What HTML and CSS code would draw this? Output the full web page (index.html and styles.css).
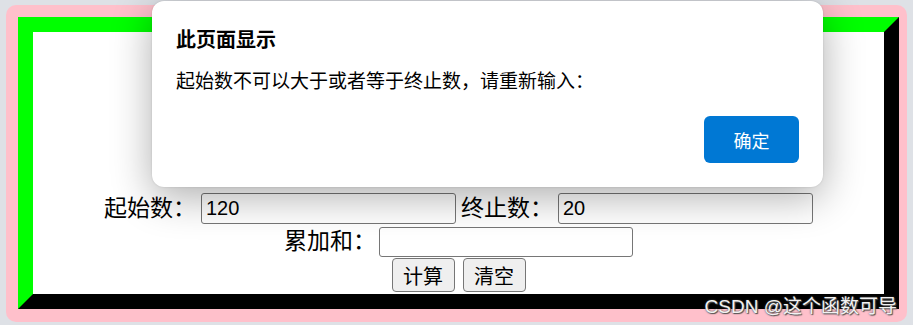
FILE: index.html
```html
<!DOCTYPE html>
<html lang="zh-CN">
<head>
<meta charset="utf-8">
<title>累加和</title>
<link rel="stylesheet" href="styles.css">
</head>
<body>
<div class="frame">
  <div class="box">
    <div class="row row-1">
      <span class="label">起始数：</span>
      <input class="field field-wide" type="text" value="120">
      <span class="label">终止数：</span>
      <input class="field field-wide" type="text" value="20">
    </div>
    <div class="row row-2">
      <span class="label">累加和：</span>
      <input class="field field-sum" type="text" value="">
    </div>
    <div class="row row-3">
      <button class="btn" type="button">计算</button>
      <button class="btn" type="button">清空</button>
    </div>
  </div>
</div>

<div class="dialog">
  <div class="dialog-title">此页面显示</div>
  <div class="dialog-msg">起始数不可以大于或者等于终止数，请重新输入：</div>
  <div class="dialog-actions">
    <button class="dialog-ok" type="button">确定</button>
  </div>
</div>

<div class="watermark">CSDN @这个函数可导</div>
</body>
</html>
```

FILE: styles.css
```css
html, body {
  margin: 0;
  padding: 0;
}

body {
  width: 913px;
  height: 325px;
  background: #dee1e6;
  position: relative;
  overflow: hidden;
  font-family: "Liberation Sans", "Noto Sans CJK SC", sans-serif;
}

.frame {
  box-sizing: border-box;
  margin: 5px 6px 0 6px;
  width: 901px;
  height: 317px;
  padding: 12px 8px 13px 12px;
  background: #ffc0cb;
  border-radius: 10px;
}

.box {
  box-sizing: border-box;
  height: 292px;
  border: 15px solid;
  border-color: #00ff00 #000 #000 #00ff00;
  background: #fff;
  padding-top: 160px;
  display: flex;
  flex-direction: column;
}

.row {
  display: flex;
  justify-content: center;
  align-items: center;
  gap: 5px;
}

.row-1 { height: 33px; }
.row-2 { height: 33px; gap: 3px; }
.row-3 { height: 34px; gap: 8px; }

.label {
  font-family: "Noto Sans CJK SC", sans-serif;
  font-size: 23px;
  line-height: 28px;
  padding-bottom: 6px;
  color: #000;
  white-space: nowrap;
}

.field {
  box-sizing: border-box;
  border: 1px solid #767676;
  border-radius: 3px;
  padding: 1px 4px;
  font-family: "Liberation Sans", sans-serif;
  font-size: 20px;
  color: #000;
  background: #fff;
  margin: 0;
}

.field-wide {
  width: 255px;
  height: 31px;
}

.field-sum {
  width: 254px;
  height: 30px;
}

.btn {
  box-sizing: border-box;
  width: 63px;
  height: 34px;
  margin: 0;
  padding: 0;
  border: 1px solid #767676;
  border-radius: 4px;
  background: #efefef;
  font-family: "Noto Sans CJK SC", sans-serif;
  font-size: 20px;
  color: #000;
}

.dialog {
  position: absolute;
  left: 152px;
  top: 1px;
  width: 671px;
  height: 186px;
  box-sizing: border-box;
  padding: 24px;
  background: #fff;
  border-radius: 12px;
  box-shadow: 0 10px 40px rgba(0, 0, 0, 0.32), 0 0 2px rgba(0, 0, 0, 0.15);
  font-family: "Noto Sans CJK SC", sans-serif;
  color: #1f1f1f;
  display: flex;
  flex-direction: column;
}

.dialog-title {
  font-size: 20px;
  font-weight: bold;
  line-height: 28px;
  color: #000;
}

.dialog-msg {
  margin-top: 13px;
  font-size: 19px;
  line-height: 28px;
  color: #000;
}

.dialog-actions {
  margin-top: 22px;
  display: flex;
  justify-content: flex-end;
}

.dialog-ok {
  width: 95px;
  height: 47px;
  border: none;
  border-radius: 6px;
  background: #0078d4;
  color: #fff;
  font-family: "Noto Sans CJK SC", sans-serif;
  font-size: 18px;
  padding: 0;
}

.watermark {
  position: absolute;
  right: 16px;
  bottom: 7px;
  font-family: "Liberation Sans", "Noto Sans CJK SC", sans-serif;
  font-size: 19px;
  line-height: 22px;
  color: #f2f2f2;
  text-shadow: 0 0 2px #444, 1px 1px 1px #555;
  white-space: nowrap;
}
```
